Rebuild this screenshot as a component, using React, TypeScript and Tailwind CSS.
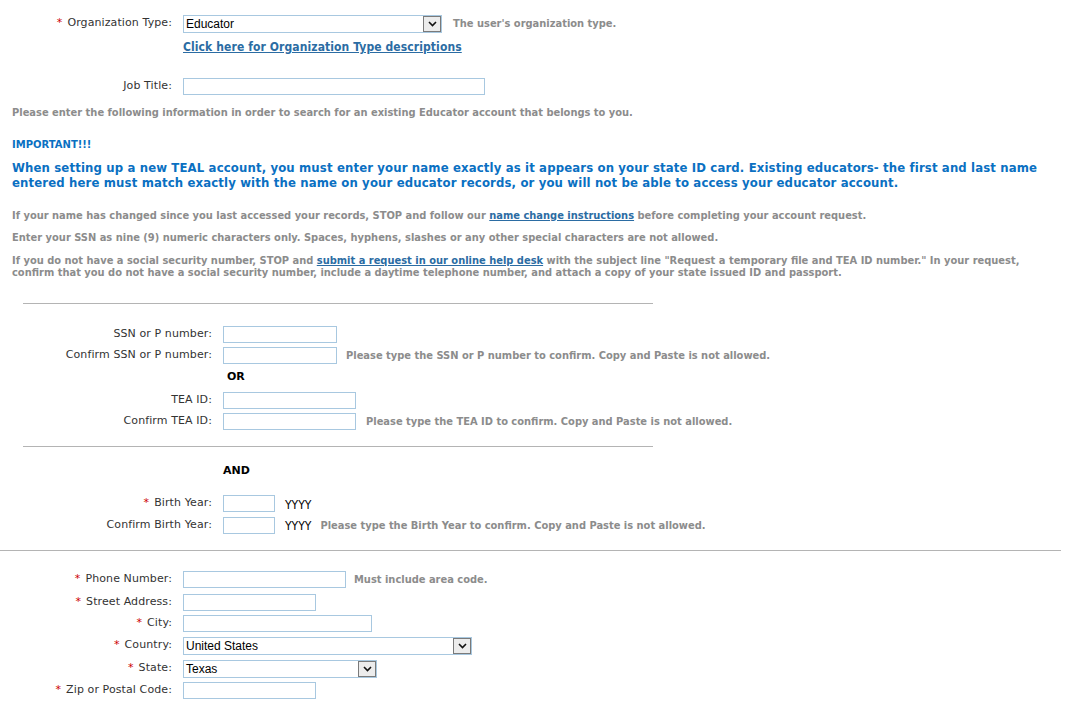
import React from "react";

const label = "font-['DejaVu_Sans',sans-serif] text-[11px] leading-[14px] pb-[2px] text-[#333333] text-right tracking-[0.1px]";
const note = "font-['DejaVu_Sans_Condensed','DejaVu_Sans',sans-serif] font-bold text-[11px] text-[#8c8c8c]";
const input = "h-[17px] border border-[#a8c8e0] bg-white";

function Req() {
  return <span className="text-[#cc0000] mr-[5px]">*</span>;
}

function Chevron() {
  return (
    <svg width="9" height="6" viewBox="0 0 9 6">
      <path d="M1 1 L4.5 4.5 L8 1" fill="none" stroke="#111" strokeWidth="1.6" />
    </svg>
  );
}

function Select({ value, w }: { value: string; w: string }) {
  return (
    <div className={`h-[18px] border border-[#a8c8e0] bg-white flex items-stretch ${w}`}>
      <span className="flex-1 pl-[2px] leading-[16px] text-[12px] text-black font-['Liberation_Sans',sans-serif]">
        {value}
      </span>
      <span className="w-[18px] bg-[#ececec] border border-[#7a7a7a] flex items-center justify-center">
        <Chevron />
      </span>
    </div>
  );
}

function Row({
  text,
  req,
  cols,
  children,
  className,
}: {
  text: string;
  req?: boolean;
  cols: string;
  children: React.ReactNode;
  className?: string;
}) {
  return (
    <div className={`grid ${cols} gap-x-[11px] items-center ${className ?? ""}`}>
      <div className={label}>
        {req && <Req />}
        {text}
      </div>
      <div className="flex items-center">{children}</div>
    </div>
  );
}

export default function App() {
  const c1 = "grid-cols-[172px_1fr]";
  const c2 = "grid-cols-[212px_1fr]";
  const hint = `${note} leading-[14px]`;
  const yyyy = "ml-[10px] leading-[14px] font-['DejaVu_Sans_Condensed','DejaVu_Sans',sans-serif] text-[12px] text-black";
  return (
    <div className="w-[1075px] h-[721px] bg-white overflow-hidden pt-[15px]">
      {/* ORGANIZATION */}
      <Row text="Organization Type:" req cols={c1} className="h-[18px]">
        <Select value="Educator" w="w-[259px]" />
        <span className={`${hint} ml-[11px]`}>The user's organization type.</span>
      </Row>
      <div className={`grid ${c1} gap-x-[11px] mt-[7px]`}>
        <div />
        <a className="font-['DejaVu_Sans_Condensed','DejaVu_Sans',sans-serif] font-bold text-[12px] tracking-[0.1px] leading-[14px] text-[#2b6ca3] underline">
          Click here for Organization Type descriptions
        </a>
      </div>
      <Row text="Job Title:" cols={c1} className="mt-[24px] h-[17px]">
        <div className={`${input} w-[302px]`} />
      </Row>

      {/* INSTRUCTIONS */}
      <div className="pl-[12px] pr-[35px]">
        <p className={`${note} leading-[14px] mt-[11px]`}>
          Please enter the following information in order to search for an existing Educator account that belongs to you.
        </p>
        <p className="mt-[18px] font-['DejaVu_Sans',sans-serif] font-bold text-[10px] leading-[13px] text-[#0a70c2]">
          IMPORTANT!!!
        </p>
        <p className="mt-[9px] font-['DejaVu_Sans_Condensed','DejaVu_Sans',sans-serif] font-bold text-[13px] tracking-[0.14px] leading-[15px] text-[#0a70c2]">
          When setting up a new TEAL account, you must enter your name exactly as it appears on your state ID card. Existing educators- the first and last name entered here must match exactly with the name on your educator records, or you will not be able to access your educator account.
        </p>
        <p className={`${note} leading-[14px] mt-[19px]`}>
          If your name has changed since you last accessed your records, STOP and follow our{" "}
          <a className="text-[#2b6ca3] underline">name change instructions</a> before completing your account request.
        </p>
        <p className={`${note} leading-[14px] mt-[8px]`}>
          Enter your SSN as nine (9) numeric characters only. Spaces, hyphens, slashes or any other special characters are not allowed.
        </p>
        <p className={`${note} leading-[12px] mt-[10px]`}>
          If you do not have a social security number, STOP and{" "}
          <a className="text-[#2b6ca3] underline">submit a request in our online help desk</a> with the subject line "Request a temporary file and TEA ID number." In your request, confirm that you do not have a social security number, include a daytime telephone number, and attach a copy of your state issued ID and passport.
        </p>
      </div>

      <hr className="mt-[24px] ml-[23px] w-[630px] border-0 border-t border-[#b4b4b4]" />

      {/* IDENTIFIERS */}
      <Row text="SSN or P number:" cols={c2} className="mt-[22px] h-[17px]">
        <div className={`${input} w-[114px]`} />
      </Row>
      <Row text="Confirm SSN or P number:" cols={c2} className="mt-[4px] h-[17px]">
        <div className={`${input} w-[114px]`} />
        <span className={`${hint} ml-[9px]`}>Please type the SSN or P number to confirm. Copy and Paste is not allowed.</span>
      </Row>
      <div className={`grid ${c2} gap-x-[11px] mt-[6px]`}>
        <div />
        <span className="pl-[4px] font-['DejaVu_Sans',sans-serif] font-bold text-[11px] leading-[14px] text-black">OR</span>
      </div>
      <Row text="TEA ID:" cols={c2} className="mt-[8px] h-[17px]">
        <div className={`${input} w-[133px]`} />
      </Row>
      <Row text="Confirm TEA ID:" cols={c2} className="mt-[4px] h-[17px]">
        <div className={`${input} w-[133px]`} />
        <span className={`${hint} ml-[10px]`}>Please type the TEA ID to confirm. Copy and Paste is not allowed.</span>
      </Row>

      <hr className="mt-[16px] ml-[23px] w-[630px] border-0 border-t border-[#b4b4b4]" />

      <div className={`grid ${c2} gap-x-[11px] mt-[17px]`}>
        <div />
        <span className="font-['DejaVu_Sans',sans-serif] font-bold text-[11px] leading-[14px] text-black">AND</span>
      </div>
      <Row text="Birth Year:" req cols={c2} className="mt-[17px] h-[17px]">
        <div className={`${input} w-[52px]`} />
        <span className={`${yyyy} mt-[2px]`}>YYYY</span>
      </Row>
      <Row text="Confirm Birth Year:" cols={c2} className="mt-[5px] h-[17px]">
        <div className={`${input} w-[52px]`} />
        <span className={yyyy}>YYYY</span>
        <span className={`${hint} ml-[9px]`}>Please type the Birth Year to confirm. Copy and Paste is not allowed.</span>
      </Row>

      <hr className="mt-[16px] w-[1061px] border-0 border-t border-[#b4b4b4]" />

      {/* CONTACT */}
      <Row text="Phone Number:" req cols={c1} className="mt-[20px] h-[17px]">
        <div className={`${input} w-[163px]`} />
        <span className={`${hint} ml-[8px]`}>Must include area code.</span>
      </Row>
      <Row text="Street Address:" req cols={c1} className="mt-[6px] h-[17px]">
        <div className={`${input} w-[133px]`} />
      </Row>
      <Row text="City:" req cols={c1} className="mt-[4px] h-[17px]">
        <div className={`${input} w-[189px]`} />
      </Row>
      <Row text="Country:" req cols={c1} className="mt-[5px] h-[18px]">
        <Select value="United States" w="w-[289px]" />
      </Row>
      <Row text="State:" req cols={c1} className="mt-[5px] h-[18px]">
        <Select value="Texas" w="w-[194px]" />
      </Row>
      <Row text="Zip or Postal Code:" req cols={c1} className="mt-[4px] h-[17px]">
        <div className={`${input} w-[133px]`} />
      </Row>
    </div>
  );
}
